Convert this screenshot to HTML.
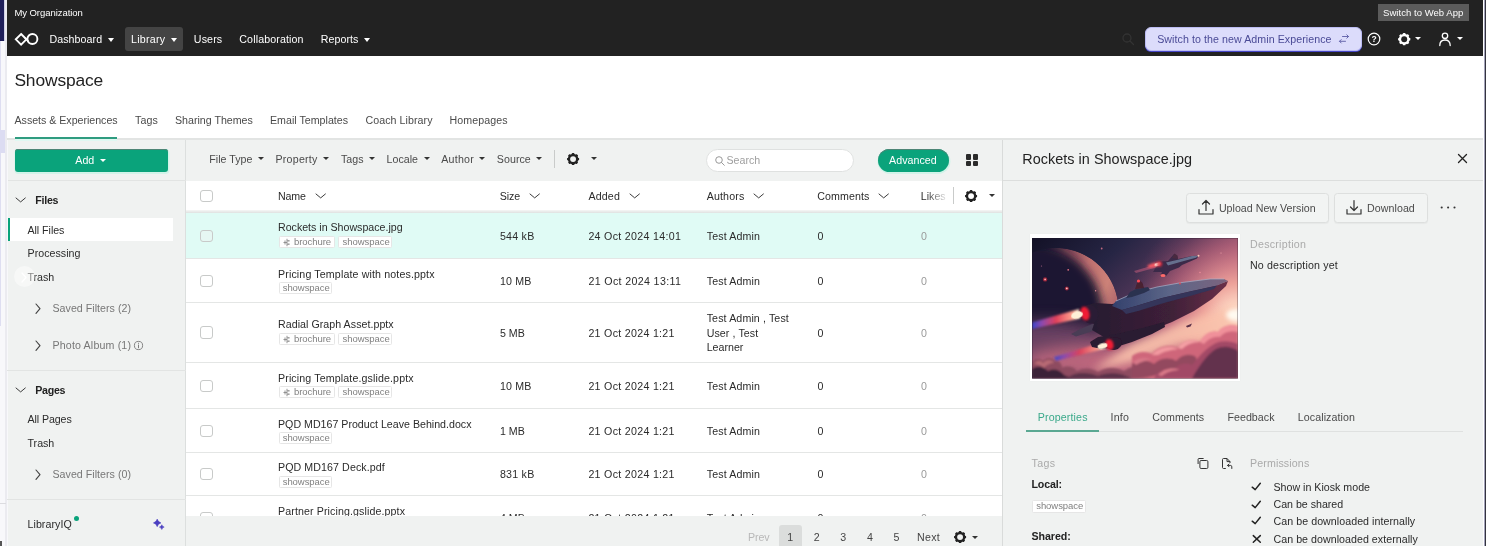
<!DOCTYPE html>
<html lang="en">
<head>
<meta charset="utf-8">
<title>Showspace</title>
<style>
*{box-sizing:border-box;margin:0;padding:0}
html,body{width:1486px;height:546px;overflow:hidden;background:#fff}
body{font-family:"Liberation Sans",sans-serif;font-size:10.65px;color:#2b2b2b;position:relative}
.a{position:absolute;white-space:nowrap}
.t{position:absolute;white-space:nowrap;line-height:1}
#root{position:absolute;left:0;top:0;width:1486px;height:546px;overflow:hidden;will-change:transform}
.tag{height:12.4px;border:1px solid #e6e6e6;border-radius:1.5px;background:#fff;color:#808080;font-size:9.5px;letter-spacing:-0.05px;line-height:10.6px;padding:0 3.5px;font-family:"Liberation Sans",sans-serif}
svg{overflow:visible}
</style>
</head>
<body>
<div id="root">
<div class="a" style="left:0px;top:0px;width:7.5px;height:546px;background:#f8f8fb;"></div>
<div class="a" style="left:0px;top:40.5px;width:1.2px;height:285px;background:#dedef1;"></div>
<div class="a" style="left:0px;top:130px;width:4.6px;height:23px;background:#dcdcf2;"></div>
<div class="a" style="left:4.6px;top:40.5px;width:2.2px;height:506px;background:#ebebf0;"></div>
<div class="a" style="left:0px;top:0px;width:4.5px;height:40.5px;background:#1e1e5a;"></div>
<div class="a" style="left:4.4px;top:0px;width:1px;height:40.5px;background:#cfcfe4;"></div>
<div class="a" style="left:5.4px;top:0px;width:1.2px;height:40.5px;background:#e8e8f0;"></div>
<div class="a" style="left:0px;top:503px;width:6px;height:1px;background:#dcdce0;"></div>
<div class="a" style="left:0px;top:541px;width:1.5px;height:5px;background:#555;"></div>
<div class="a" style="left:6.6px;top:0px;width:1476.4px;height:56.3px;background:#222222;"></div>
<div class="a" style="left:1483px;top:0px;width:3px;height:546px;background:#ffffff;"></div>
<div class="a" style="left:1484px;top:0px;width:1px;height:546px;background:#a4a4bb;"></div>
<div class="a" style="left:1485px;top:0px;width:1px;height:546px;background:#34343f;"></div>
<div class="t" style="left:14.4px;top:8.36px;font-size:9.5px;color:#fff;letter-spacing:-0.055px;">My Organization</div>
<svg class="a" style="left:14px;top:31px;" width="26" height="16" viewBox="0 0 26 16"><path d="M7.100 3 L12.400 8.300 L7.100 13.600 L1.800 8.300 Z" fill="none" stroke="#fff" stroke-width="1.900" stroke-linejoin="miter"/><circle cx="18.400" cy="8" r="5" fill="none" stroke="#fff" stroke-width="1.900"/><path d="M11 6.900 L13.400 9.300 L14.600 11" fill="none" stroke="#fff" stroke-width="1.900"/></svg>
<div class="t" style="left:49.4px;top:34.10px;font-size:10.65px;color:#fff;letter-spacing:0.080px;">Dashboard</div>
<div class="a" style="left:108px;top:37.50px;width:0;height:0;border-left:3.5px solid transparent;border-right:3.5px solid transparent;border-top:4px solid #fff"></div>
<div class="a" style="left:125px;top:27px;width:58px;height:24px;background:#444444;border-radius:3px;"></div>
<div class="t" style="left:131px;top:34.10px;font-size:10.65px;color:#fff;letter-spacing:0.245px;">Library</div>
<div class="a" style="left:170.5px;top:37.50px;width:0;height:0;border-left:3.5px solid transparent;border-right:3.5px solid transparent;border-top:4px solid #fff"></div>
<div class="t" style="left:193.8px;top:34.10px;font-size:10.65px;color:#fff;letter-spacing:0.151px;">Users</div>
<div class="t" style="left:239.3px;top:34.10px;font-size:10.65px;color:#fff;letter-spacing:0.125px;">Collaboration</div>
<div class="t" style="left:320.7px;top:34.10px;font-size:10.65px;color:#fff;letter-spacing:0.072px;">Reports</div>
<div class="a" style="left:364px;top:37.50px;width:0;height:0;border-left:3.5px solid transparent;border-right:3.5px solid transparent;border-top:4px solid #fff"></div>
<svg class="a" style="left:1121px;top:32px;" width="14" height="14" viewBox="0 0 14 14"><circle cx="6" cy="6" r="4" fill="none" stroke="#333" stroke-width="1.3"/><path d="M9 9 L12.500 12.500" stroke="#333" stroke-width="1.3" stroke-linecap="round"/></svg>
<div class="a" style="left:1145px;top:27px;width:217px;height:24px;background:#dcdcfb;border-radius:6px;border:1px solid #bcbcf3;box-shadow:0 1px 0 #4545c8;"></div>
<div class="t" style="left:1157.2px;top:34.00px;font-size:10.65px;color:#4a4a96;letter-spacing:0.066px;">Switch to the new Admin Experience</div>
<svg class="a" style="left:1337px;top:33px;" width="14" height="12" viewBox="0 0 14 12"><path d="M5.500 3.500 H11.500 M9.800 1.800 L11.500 3.500 L9.800 5.200 M8.500 8.300 H2.500 M4.200 6.600 L2.500 8.300 L4.200 10" fill="none" stroke="#6262aa" stroke-width="0.95" stroke-linecap="round" stroke-linejoin="round"/></svg>
<svg class="a" style="left:1366px;top:31px;" width="16" height="16" viewBox="0 0 16 16"><circle cx="8" cy="8" r="5.800" fill="none" stroke="#fff" stroke-width="1.2"/><text x="8" y="11" font-size="8.500" font-family="Liberation Sans, sans-serif" font-weight="700" fill="#fff" text-anchor="middle">?</text></svg>
<svg class="a" style="left:1396.8px;top:31.8px;" width="14.399999999999999" height="14.399999999999999" viewBox="0 0 14.399999999999999 14.399999999999999"><g transform="translate(7.20,7.20)"><rect x="-1.20" y="-6.12" width="2.40" height="1.80" rx="0.4" transform="rotate(0)" fill="#fff"/><rect x="-1.20" y="-6.12" width="2.40" height="1.80" rx="0.4" transform="rotate(45)" fill="#fff"/><rect x="-1.20" y="-6.12" width="2.40" height="1.80" rx="0.4" transform="rotate(90)" fill="#fff"/><rect x="-1.20" y="-6.12" width="2.40" height="1.80" rx="0.4" transform="rotate(135)" fill="#fff"/><rect x="-1.20" y="-6.12" width="2.40" height="1.80" rx="0.4" transform="rotate(180)" fill="#fff"/><rect x="-1.20" y="-6.12" width="2.40" height="1.80" rx="0.4" transform="rotate(225)" fill="#fff"/><rect x="-1.20" y="-6.12" width="2.40" height="1.80" rx="0.4" transform="rotate(270)" fill="#fff"/><rect x="-1.20" y="-6.12" width="2.40" height="1.80" rx="0.4" transform="rotate(315)" fill="#fff"/><circle r="5.40" fill="#fff"/><circle r="3.00" fill="#222222"/></g></svg>
<div class="a" style="left:1415.4px;top:37.20px;width:0;height:0;border-left:3.25px solid transparent;border-right:3.25px solid transparent;border-top:3.6px solid #fff"></div>
<svg class="a" style="left:1437px;top:31px;" width="16" height="16" viewBox="0 0 16 16"><circle cx="8" cy="4.800" r="2.700" fill="none" stroke="#fff" stroke-width="1.3"/><path d="M2.800 14.500 C2.800 10.500 5 9 8 9 C11 9 13.200 10.500 13.200 14.500" fill="none" stroke="#fff" stroke-width="1.3" stroke-linecap="round"/></svg>
<div class="a" style="left:1457.2px;top:37.20px;width:0;height:0;border-left:3.25px solid transparent;border-right:3.25px solid transparent;border-top:3.6px solid #fff"></div>
<div class="a" style="left:1377.7px;top:3.6px;width:91.3px;height:17.6px;background:#5b5b5b;"></div>
<div class="t" style="left:1383px;top:7.96px;font-size:9.5px;color:#fff;letter-spacing:0.046px;">Switch to Web App</div>
<div class="a" style="left:6.6px;top:56.3px;width:1476.4px;height:82px;background:#fff;"></div>
<div class="t" style="left:14.4px;top:72.40px;font-size:17.4px;color:#222;letter-spacing:-0.128px;">Showspace</div>
<div class="t" style="left:14.5px;top:115.10px;font-size:10.65px;color:#4a4a4a;letter-spacing:-0.021px;">Assets &amp; Experiences</div>
<div class="t" style="left:135px;top:115.10px;font-size:10.65px;color:#4a4a4a;letter-spacing:0.105px;">Tags</div>
<div class="t" style="left:175px;top:115.10px;font-size:10.65px;color:#4a4a4a;letter-spacing:-0.007px;">Sharing Themes</div>
<div class="t" style="left:270px;top:115.10px;font-size:10.65px;color:#4a4a4a;letter-spacing:0.016px;">Email Templates</div>
<div class="t" style="left:365.5px;top:115.10px;font-size:10.65px;color:#4a4a4a;letter-spacing:0.062px;">Coach Library</div>
<div class="t" style="left:449.5px;top:115.10px;font-size:10.65px;color:#4a4a4a;letter-spacing:0.076px;">Homepages</div>
<div class="a" style="left:7px;top:138px;width:1476px;height:1.5px;background:#e2e4e3;"></div>
<div class="a" style="left:7.5px;top:139.5px;width:178.5px;height:407px;background:#f0f2f1;border-right:1px solid #dcdfde;"></div>
<div class="a" style="left:14.7px;top:137.1px;width:102.8px;height:1.8px;background:#2f9c80;"></div>
<div class="a" style="left:14.7px;top:138.9px;width:102.8px;height:2.2px;background:#e0f8f2;"></div>
<div class="a" style="left:14.5px;top:148.7px;width:153px;height:23.2px;background:#0aa37b;border-radius:3px;box-shadow:0.5px 1px 0 1px #d2f3e9, inset 0 1px 0 #4d8576;"></div>
<div class="t" style="left:75.3px;top:155.30px;font-size:10.65px;color:#fff;">Add</div>
<div class="a" style="left:100.3px;top:159.25px;width:0;height:0;border-left:3.0px solid transparent;border-right:3.0px solid transparent;border-top:3.5px solid #fff"></div>
<div class="a" style="left:7.5px;top:180.2px;width:178.5px;height:1px;background:#e2e4e3;"></div>
<svg class="a" style="left:14.6px;top:197.15px;" width="11.3" height="6.9" viewBox="0 0 11.3 6.9"><path d="M1 1 L5.65 4.9 L10.3 1" fill="none" stroke="#3a3a3a" stroke-width="1.0" stroke-linecap="round" stroke-linejoin="round"/></svg>
<div class="t" style="left:35.2px;top:195.10px;font-size:10.65px;color:#222;font-weight:700;letter-spacing:-0.238px;">Files</div>
<div class="a" style="left:9px;top:218px;width:164px;height:23px;background:#fff;"></div>
<div class="a" style="left:8px;top:218px;width:2px;height:23px;background:#0aa37b;"></div>
<div class="t" style="left:27.5px;top:224.60px;font-size:10.65px;color:#2b2b2b;letter-spacing:-0.044px;">All Files</div>
<div class="t" style="left:27.5px;top:248.20px;font-size:10.65px;color:#2b2b2b;letter-spacing:0.040px;">Processing</div>
<div class="t" style="left:27.5px;top:272.00px;font-size:10.65px;color:#2b2b2b;letter-spacing:-0.028px;">Trash</div>
<div class="a" style="left:14px;top:266px;width:21px;height:21px;background:rgba(255,255,255,.45);border-radius:50%;"></div>
<svg class="a" style="left:21px;top:271.5px;" width="7" height="11" viewBox="0 0 7 11"><path d="M1 1 L5 5.5 L1 10" fill="none" stroke="#fff" stroke-width="1.2" stroke-linecap="round" stroke-linejoin="round"/></svg>
<svg class="a" style="left:35px;top:302.6px;" width="7" height="11.4" viewBox="0 0 7 11.4"><path d="M1 1 L5 5.7 L1 10.4" fill="none" stroke="#444" stroke-width="1.15" stroke-linecap="round" stroke-linejoin="round"/></svg>
<div class="t" style="left:52.5px;top:303.00px;font-size:10.65px;color:#777;letter-spacing:0.027px;">Saved Filters (2)</div>
<svg class="a" style="left:35px;top:339.6px;" width="7" height="11.4" viewBox="0 0 7 11.4"><path d="M1 1 L5 5.7 L1 10.4" fill="none" stroke="#444" stroke-width="1.15" stroke-linecap="round" stroke-linejoin="round"/></svg>
<div class="t" style="left:52.5px;top:340.00px;font-size:10.65px;color:#777;letter-spacing:0.156px;">Photo Album (1)</div>
<svg class="a" style="left:133.1px;top:339.5px;" width="11" height="11" viewBox="0 0 11 11"><circle cx="5.500" cy="5.500" r="4.100" fill="none" stroke="#777" stroke-width="0.9"/><path d="M5.500 5 V7.800 M5.500 3.200 V3.400" stroke="#777" stroke-width="0.95" stroke-linecap="round"/></svg>
<div class="a" style="left:7px;top:370px;width:179px;height:1px;background:#e2e4e3;"></div>
<svg class="a" style="left:14.6px;top:387.15000000000003px;" width="11.3" height="6.9" viewBox="0 0 11.3 6.9"><path d="M1 1 L5.65 4.9 L10.3 1" fill="none" stroke="#3a3a3a" stroke-width="1.0" stroke-linecap="round" stroke-linejoin="round"/></svg>
<div class="t" style="left:35.2px;top:385.10px;font-size:10.65px;color:#222;font-weight:700;letter-spacing:-0.265px;">Pages</div>
<div class="t" style="left:27.5px;top:414.40px;font-size:10.65px;color:#2b2b2b;letter-spacing:-0.094px;">All Pages</div>
<div class="t" style="left:27.5px;top:438.00px;font-size:10.65px;color:#2b2b2b;letter-spacing:-0.003px;">Trash</div>
<svg class="a" style="left:35px;top:468.6px;" width="7" height="11.4" viewBox="0 0 7 11.4"><path d="M1 1 L5 5.7 L1 10.4" fill="none" stroke="#444" stroke-width="1.15" stroke-linecap="round" stroke-linejoin="round"/></svg>
<div class="t" style="left:52.5px;top:469.00px;font-size:10.65px;color:#777;letter-spacing:0.027px;">Saved Filters (0)</div>
<div class="a" style="left:7px;top:499px;width:179px;height:1px;background:#e2e4e3;"></div>
<div class="t" style="left:27.5px;top:519.10px;font-size:10.65px;color:#2b2b2b;letter-spacing:0.054px;">LibraryIQ</div>
<div class="a" style="left:73.8px;top:516px;width:5px;height:5px;background:#0aa37b;border-radius:50%;"></div>
<svg class="a" style="left:152px;top:516.5px;" width="14" height="14" viewBox="0 0 14 14"><path d="M5.2 2.10 Q5.96 5.14 9.00 5.9 Q5.96 6.66 5.2 9.70 Q4.44 6.66 1.40 5.9 Q4.44 5.14 5.2 2.10 Z" fill="#4a3fc0" stroke="#4a3fc0" stroke-width="0.5" stroke-linejoin="round"/><path d="M9.8 7.70 Q10.28 9.62 12.20 10.1 Q10.28 10.58 9.8 12.50 Q9.32 10.58 7.40 10.1 Q9.32 9.62 9.8 7.70 Z" fill="#4a3fc0" stroke="#4a3fc0" stroke-width="0.5" stroke-linejoin="round"/></svg>
<div class="a" style="left:186px;top:139.5px;width:817px;height:41.5px;background:#f0f2f1;"></div>
<div class="t" style="left:209.2px;top:153.60px;font-size:10.65px;color:#4a4a4a;letter-spacing:0.039px;">File Type</div>
<div class="a" style="left:257.6px;top:157.35px;width:0;height:0;border-left:3.3px solid transparent;border-right:3.3px solid transparent;border-top:3.7px solid #333"></div>
<div class="t" style="left:275.5px;top:153.60px;font-size:10.65px;color:#4a4a4a;letter-spacing:0.226px;">Property</div>
<div class="a" style="left:322.7px;top:157.35px;width:0;height:0;border-left:3.3px solid transparent;border-right:3.3px solid transparent;border-top:3.7px solid #333"></div>
<div class="t" style="left:340.9px;top:153.60px;font-size:10.65px;color:#4a4a4a;letter-spacing:0.039px;">Tags</div>
<div class="a" style="left:369.0px;top:157.35px;width:0;height:0;border-left:3.3px solid transparent;border-right:3.3px solid transparent;border-top:3.7px solid #333"></div>
<div class="t" style="left:386.5px;top:153.60px;font-size:10.65px;color:#4a4a4a;letter-spacing:0.028px;">Locale</div>
<div class="a" style="left:423.5px;top:157.35px;width:0;height:0;border-left:3.3px solid transparent;border-right:3.3px solid transparent;border-top:3.7px solid #333"></div>
<div class="t" style="left:441.3px;top:153.60px;font-size:10.65px;color:#4a4a4a;letter-spacing:0.228px;">Author</div>
<div class="a" style="left:479.1px;top:157.35px;width:0;height:0;border-left:3.3px solid transparent;border-right:3.3px solid transparent;border-top:3.7px solid #333"></div>
<div class="t" style="left:496.8px;top:153.60px;font-size:10.65px;color:#4a4a4a;letter-spacing:0.056px;">Source</div>
<div class="a" style="left:536.0999999999999px;top:157.35px;width:0;height:0;border-left:3.3px solid transparent;border-right:3.3px solid transparent;border-top:3.7px solid #333"></div>
<div class="a" style="left:554px;top:150px;width:1px;height:18px;background:#c9cbca;"></div>
<svg class="a" style="left:565.62px;top:151.61999999999998px;" width="14.16" height="14.16" viewBox="0 0 14.16 14.16"><g transform="translate(7.08,7.08)"><rect x="-1.18" y="-6.02" width="2.36" height="1.77" rx="0.4" transform="rotate(0)" fill="#222"/><rect x="-1.18" y="-6.02" width="2.36" height="1.77" rx="0.4" transform="rotate(45)" fill="#222"/><rect x="-1.18" y="-6.02" width="2.36" height="1.77" rx="0.4" transform="rotate(90)" fill="#222"/><rect x="-1.18" y="-6.02" width="2.36" height="1.77" rx="0.4" transform="rotate(135)" fill="#222"/><rect x="-1.18" y="-6.02" width="2.36" height="1.77" rx="0.4" transform="rotate(180)" fill="#222"/><rect x="-1.18" y="-6.02" width="2.36" height="1.77" rx="0.4" transform="rotate(225)" fill="#222"/><rect x="-1.18" y="-6.02" width="2.36" height="1.77" rx="0.4" transform="rotate(270)" fill="#222"/><rect x="-1.18" y="-6.02" width="2.36" height="1.77" rx="0.4" transform="rotate(315)" fill="#222"/><circle r="5.31" fill="#222"/><circle r="2.95" fill="#f0f2f1"/></g></svg>
<div class="a" style="left:590.8px;top:157.15px;width:0;height:0;border-left:3.3px solid transparent;border-right:3.3px solid transparent;border-top:3.7px solid #333"></div>
<div class="a" style="left:706.4px;top:149px;width:147.4px;height:22.5px;background:#fff;border:1px solid #dfe1e0;border-radius:12px;"></div>
<svg class="a" style="left:714px;top:154.5px;" width="12" height="12" viewBox="0 0 12 12"><circle cx="5" cy="5" r="3.300" fill="none" stroke="#999" stroke-width="1"/><path d="M7.500 7.500 L10.300 10.300" stroke="#999" stroke-width="1" stroke-linecap="round"/></svg>
<div class="t" style="left:726.5px;top:155.30px;font-size:10.65px;color:#a0a0a0;letter-spacing:-0.004px;">Search</div>
<div class="a" style="left:878px;top:148.6px;width:70.5px;height:23.2px;background:#0aa37b;border-radius:12px;box-shadow:0.5px 1px 0 1px #d2f3e9, inset 0 1px 0 #4d8576;"></div>
<div class="t" style="left:889.1px;top:155.30px;font-size:10.65px;color:#fff;letter-spacing:0.039px;">Advanced</div>
<div class="a" style="left:966.2px;top:154.4px;width:5.2px;height:5.2px;background:#2b2b2b;border-radius:1px;"></div>
<div class="a" style="left:966.2px;top:161.3px;width:5.2px;height:5.2px;background:#2b2b2b;border-radius:1px;"></div>
<div class="a" style="left:973.1px;top:154.4px;width:5.2px;height:5.2px;background:#2b2b2b;border-radius:1px;"></div>
<div class="a" style="left:973.1px;top:161.3px;width:5.2px;height:5.2px;background:#2b2b2b;border-radius:1px;"></div>
<div class="a" style="left:186px;top:181px;width:817px;height:365px;background:#fff;"></div>
<div class="a" style="left:186px;top:210px;width:817px;height:2.9px;background:linear-gradient(#f6f7f6,#dfe1e0);"></div>
<div class="a" style="left:200.4px;top:189.8px;width:12.3px;height:12.3px;background:#fff;border:1px solid #c8cac9;border-radius:3px;"></div>
<div class="t" style="left:278px;top:190.80px;font-size:10.65px;color:#2b2b2b;letter-spacing:-0.130px;">Name</div>
<svg class="a" style="left:315.1px;top:192.95000000000002px;" width="11.4" height="6.9" viewBox="0 0 11.4 6.9"><path d="M1 1 L5.7 4.9 L10.4 1" fill="none" stroke="#3a3a3a" stroke-width="1.0" stroke-linecap="round" stroke-linejoin="round"/></svg>
<div class="t" style="left:499.7px;top:190.80px;font-size:10.65px;color:#2b2b2b;letter-spacing:-0.101px;">Size</div>
<svg class="a" style="left:529.0px;top:192.95000000000002px;" width="11.4" height="6.9" viewBox="0 0 11.4 6.9"><path d="M1 1 L5.7 4.9 L10.4 1" fill="none" stroke="#3a3a3a" stroke-width="1.0" stroke-linecap="round" stroke-linejoin="round"/></svg>
<div class="t" style="left:588.4px;top:190.80px;font-size:10.65px;color:#2b2b2b;letter-spacing:0.180px;">Added</div>
<svg class="a" style="left:628.7px;top:192.95000000000002px;" width="11.4" height="6.9" viewBox="0 0 11.4 6.9"><path d="M1 1 L5.7 4.9 L10.4 1" fill="none" stroke="#3a3a3a" stroke-width="1.0" stroke-linecap="round" stroke-linejoin="round"/></svg>
<div class="t" style="left:706.7px;top:190.80px;font-size:10.65px;color:#2b2b2b;letter-spacing:0.155px;">Authors</div>
<svg class="a" style="left:753.1px;top:192.95000000000002px;" width="11.4" height="6.9" viewBox="0 0 11.4 6.9"><path d="M1 1 L5.7 4.9 L10.4 1" fill="none" stroke="#3a3a3a" stroke-width="1.0" stroke-linecap="round" stroke-linejoin="round"/></svg>
<div class="t" style="left:817.2px;top:190.80px;font-size:10.65px;color:#2b2b2b;letter-spacing:0.092px;">Comments</div>
<svg class="a" style="left:878.4px;top:192.95000000000002px;" width="11.4" height="6.9" viewBox="0 0 11.4 6.9"><path d="M1 1 L5.7 4.9 L10.4 1" fill="none" stroke="#3a3a3a" stroke-width="1.0" stroke-linecap="round" stroke-linejoin="round"/></svg>
<div class="t" style="left:920.8px;top:190.80px;font-size:10.65px;color:#2b2b2b;letter-spacing:0.014px;">Likes</div>
<div class="a" style="left:926px;top:185px;width:27px;height:22px;background:linear-gradient(90deg,rgba(255,255,255,0),rgba(255,255,255,.95) 80%);"></div>
<div class="a" style="left:953px;top:187px;width:1px;height:17px;background:#c9cbca;"></div>
<svg class="a" style="left:964.3199999999999px;top:188.72px;" width="14.16" height="14.16" viewBox="0 0 14.16 14.16"><g transform="translate(7.08,7.08)"><rect x="-1.18" y="-6.02" width="2.36" height="1.77" rx="0.4" transform="rotate(0)" fill="#222"/><rect x="-1.18" y="-6.02" width="2.36" height="1.77" rx="0.4" transform="rotate(45)" fill="#222"/><rect x="-1.18" y="-6.02" width="2.36" height="1.77" rx="0.4" transform="rotate(90)" fill="#222"/><rect x="-1.18" y="-6.02" width="2.36" height="1.77" rx="0.4" transform="rotate(135)" fill="#222"/><rect x="-1.18" y="-6.02" width="2.36" height="1.77" rx="0.4" transform="rotate(180)" fill="#222"/><rect x="-1.18" y="-6.02" width="2.36" height="1.77" rx="0.4" transform="rotate(225)" fill="#222"/><rect x="-1.18" y="-6.02" width="2.36" height="1.77" rx="0.4" transform="rotate(270)" fill="#222"/><rect x="-1.18" y="-6.02" width="2.36" height="1.77" rx="0.4" transform="rotate(315)" fill="#222"/><circle r="5.31" fill="#222"/><circle r="2.95" fill="#fff"/></g></svg>
<div class="a" style="left:988.9px;top:194.45px;width:0;height:0;border-left:3.3px solid transparent;border-right:3.3px solid transparent;border-top:3.7px solid #333"></div>
<div class="a" style="left:186px;top:212.9px;width:817px;height:45.400000000000006px;background:#e0fbf5;"></div>
<div class="a" style="left:186px;top:258.3px;width:817px;height:1px;background:#e4e6e5;"></div>
<div class="a" style="left:200.4px;top:229.79999999999998px;width:12.3px;height:12.3px;background:#e6f7f3;border:1px solid #c8cac9;border-radius:3px;"></div>
<div class="t" style="left:278px;top:222.30px;font-size:10.65px;color:#2b2b2b;letter-spacing:-0.009px;">Rockets in Showspace.jpg</div>
<div class="a tag" style="left:278.5px;top:235.50px;padding-left:14.5px;width:56.3px;"><svg width="9" height="9" viewBox="0 0 9 9" style="position:absolute;left:3.500px;top:1.300px"><path d="M4 0.800 V8.200 M2 2.500 V6.500 M0.500 4.500 H4 M6 2 V3.600 M6 5.400 V7 M4 2.800 H6 M4 6.200 H6" stroke="#8a8a8a" stroke-width="0.9" fill="none"/></svg>brochure</div>
<div class="a tag" style="left:338.4px;top:235.50px;padding-left:3.2px;width:53.4px;">showspace</div>
<div class="t" style="left:499.9px;top:231.00px;font-size:10.65px;color:#2b2b2b;letter-spacing:0.252px;">544 kB</div>
<div class="t" style="left:588.4px;top:231.00px;font-size:10.65px;color:#2b2b2b;letter-spacing:0.309px;">24 Oct 2024 14:01</div>
<div class="t" style="left:706.7px;top:231.00px;font-size:10.65px;color:#2b2b2b;letter-spacing:0.128px;">Test Admin</div>
<div class="t" style="left:817.4px;top:231.00px;font-size:10.65px;color:#2b2b2b;">0</div>
<div class="t" style="left:921px;top:231.00px;font-size:10.65px;color:#9a9a9a;">0</div>
<div class="a" style="left:186px;top:302px;width:817px;height:1px;background:#e4e6e5;"></div>
<div class="a" style="left:200.4px;top:274.8px;width:12.3px;height:12.3px;background:#fff;border:1px solid #c8cac9;border-radius:3px;"></div>
<div class="t" style="left:278px;top:268.80px;font-size:10.65px;color:#2b2b2b;letter-spacing:0.132px;">Pricing Template with notes.pptx</div>
<div class="a tag" style="left:278.5px;top:282.00px;padding-left:3.2px;width:53.4px;">showspace</div>
<div class="t" style="left:499.9px;top:276.00px;font-size:10.65px;color:#2b2b2b;letter-spacing:0.184px;">10 MB</div>
<div class="t" style="left:588.4px;top:276.00px;font-size:10.65px;color:#2b2b2b;letter-spacing:0.357px;">21 Oct 2024 13:11</div>
<div class="t" style="left:706.7px;top:276.00px;font-size:10.65px;color:#2b2b2b;letter-spacing:0.128px;">Test Admin</div>
<div class="t" style="left:817.4px;top:276.00px;font-size:10.65px;color:#2b2b2b;">0</div>
<div class="t" style="left:921px;top:276.00px;font-size:10.65px;color:#9a9a9a;">0</div>
<div class="a" style="left:186px;top:362px;width:817px;height:1px;background:#e4e6e5;"></div>
<div class="a" style="left:200.4px;top:326.40000000000003px;width:12.3px;height:12.3px;background:#fff;border:1px solid #c8cac9;border-radius:3px;"></div>
<div class="t" style="left:278px;top:319.20px;font-size:10.65px;color:#2b2b2b;letter-spacing:0.043px;">Radial Graph Asset.pptx</div>
<div class="a tag" style="left:278.5px;top:332.50px;padding-left:14.5px;width:56.3px;"><svg width="9" height="9" viewBox="0 0 9 9" style="position:absolute;left:3.500px;top:1.300px"><path d="M4 0.800 V8.200 M2 2.500 V6.500 M0.500 4.500 H4 M6 2 V3.600 M6 5.400 V7 M4 2.800 H6 M4 6.200 H6" stroke="#8a8a8a" stroke-width="0.9" fill="none"/></svg>brochure</div>
<div class="a tag" style="left:338.4px;top:332.50px;padding-left:3.2px;width:53.4px;">showspace</div>
<div class="t" style="left:499.9px;top:327.60px;font-size:10.65px;color:#2b2b2b;letter-spacing:0.019px;">5 MB</div>
<div class="t" style="left:588.4px;top:327.60px;font-size:10.65px;color:#2b2b2b;letter-spacing:0.297px;">21 Oct 2024 1:21</div>
<div class="t" style="left:706.7px;top:312.80px;font-size:10.65px;color:#2b2b2b;letter-spacing:0.117px;">Test Admin , Test</div>
<div class="t" style="left:706.7px;top:327.60px;font-size:10.65px;color:#2b2b2b;letter-spacing:0.084px;">User , Test</div>
<div class="t" style="left:706.7px;top:342.40px;font-size:10.65px;color:#2b2b2b;letter-spacing:0.002px;">Learner</div>
<div class="t" style="left:817.4px;top:327.60px;font-size:10.65px;color:#2b2b2b;">0</div>
<div class="t" style="left:921px;top:327.60px;font-size:10.65px;color:#9a9a9a;">0</div>
<div class="a" style="left:186px;top:408px;width:817px;height:1px;background:#e4e6e5;"></div>
<div class="a" style="left:200.4px;top:379.6px;width:12.3px;height:12.3px;background:#fff;border:1px solid #c8cac9;border-radius:3px;"></div>
<div class="t" style="left:278px;top:372.60px;font-size:10.65px;color:#2b2b2b;letter-spacing:0.122px;">Pricing Template.gslide.pptx</div>
<div class="a tag" style="left:278.5px;top:385.90px;padding-left:14.5px;width:56.3px;"><svg width="9" height="9" viewBox="0 0 9 9" style="position:absolute;left:3.500px;top:1.300px"><path d="M4 0.800 V8.200 M2 2.500 V6.500 M0.500 4.500 H4 M6 2 V3.600 M6 5.400 V7 M4 2.800 H6 M4 6.200 H6" stroke="#8a8a8a" stroke-width="0.9" fill="none"/></svg>brochure</div>
<div class="a tag" style="left:338.4px;top:385.90px;padding-left:3.2px;width:53.4px;">showspace</div>
<div class="t" style="left:499.9px;top:380.80px;font-size:10.65px;color:#2b2b2b;letter-spacing:0.184px;">10 MB</div>
<div class="t" style="left:588.4px;top:380.80px;font-size:10.65px;color:#2b2b2b;letter-spacing:0.297px;">21 Oct 2024 1:21</div>
<div class="t" style="left:706.7px;top:380.80px;font-size:10.65px;color:#2b2b2b;letter-spacing:0.128px;">Test Admin</div>
<div class="t" style="left:817.4px;top:380.80px;font-size:10.65px;color:#2b2b2b;">0</div>
<div class="t" style="left:921px;top:380.80px;font-size:10.65px;color:#9a9a9a;">0</div>
<div class="a" style="left:186px;top:452px;width:817px;height:1px;background:#e4e6e5;"></div>
<div class="a" style="left:200.4px;top:424.6px;width:12.3px;height:12.3px;background:#fff;border:1px solid #c8cac9;border-radius:3px;"></div>
<div class="t" style="left:278px;top:418.80px;font-size:10.65px;color:#2b2b2b;letter-spacing:0.002px;">PQD MD167 Product Leave Behind.docx</div>
<div class="a tag" style="left:278.5px;top:432.10px;padding-left:3.2px;width:53.4px;">showspace</div>
<div class="t" style="left:499.9px;top:425.80px;font-size:10.65px;color:#2b2b2b;letter-spacing:0.019px;">1 MB</div>
<div class="t" style="left:588.4px;top:425.80px;font-size:10.65px;color:#2b2b2b;letter-spacing:0.297px;">21 Oct 2024 1:21</div>
<div class="t" style="left:706.7px;top:425.80px;font-size:10.65px;color:#2b2b2b;letter-spacing:0.128px;">Test Admin</div>
<div class="t" style="left:817.4px;top:425.80px;font-size:10.65px;color:#2b2b2b;">0</div>
<div class="t" style="left:921px;top:425.80px;font-size:10.65px;color:#9a9a9a;">0</div>
<div class="a" style="left:186px;top:495px;width:817px;height:1px;background:#e4e6e5;"></div>
<div class="a" style="left:200.4px;top:468.20000000000005px;width:12.3px;height:12.3px;background:#fff;border:1px solid #c8cac9;border-radius:3px;"></div>
<div class="t" style="left:278px;top:462.40px;font-size:10.65px;color:#2b2b2b;letter-spacing:0.084px;">PQD MD167 Deck.pdf</div>
<div class="a tag" style="left:278.5px;top:475.60px;padding-left:3.2px;width:53.4px;">showspace</div>
<div class="t" style="left:499.9px;top:469.40px;font-size:10.65px;color:#2b2b2b;letter-spacing:0.252px;">831 kB</div>
<div class="t" style="left:588.4px;top:469.40px;font-size:10.65px;color:#2b2b2b;letter-spacing:0.297px;">21 Oct 2024 1:21</div>
<div class="t" style="left:706.7px;top:469.40px;font-size:10.65px;color:#2b2b2b;letter-spacing:0.128px;">Test Admin</div>
<div class="t" style="left:817.4px;top:469.40px;font-size:10.65px;color:#2b2b2b;">0</div>
<div class="t" style="left:921px;top:469.40px;font-size:10.65px;color:#9a9a9a;">0</div>
<div class="a" style="left:186px;top:540px;width:817px;height:1px;background:#e4e6e5;"></div>
<div class="a" style="left:200.4px;top:512.0px;width:12.3px;height:12.3px;background:#fff;border:1px solid #c8cac9;border-radius:3px;"></div>
<div class="t" style="left:278px;top:506.00px;font-size:10.65px;color:#2b2b2b;letter-spacing:0.108px;">Partner Pricing.gslide.pptx</div>
<div class="a tag" style="left:278.5px;top:518.70px;padding-left:3.2px;width:53.4px;">showspace</div>
<div class="t" style="left:499.9px;top:513.20px;font-size:10.65px;color:#2b2b2b;letter-spacing:0.019px;">4 MB</div>
<div class="t" style="left:588.4px;top:513.20px;font-size:10.65px;color:#2b2b2b;letter-spacing:0.297px;">21 Oct 2024 1:21</div>
<div class="t" style="left:706.7px;top:513.20px;font-size:10.65px;color:#2b2b2b;letter-spacing:0.128px;">Test Admin</div>
<div class="t" style="left:817.4px;top:513.20px;font-size:10.65px;color:#2b2b2b;">0</div>
<div class="t" style="left:921px;top:513.20px;font-size:10.65px;color:#9a9a9a;">0</div>
<div class="a" style="left:186px;top:516px;width:817px;height:30px;background:#f0f2f1;"></div>
<div class="t" style="left:748px;top:532.10px;font-size:10.65px;color:#b8b8b8;letter-spacing:-0.130px;">Prev</div>
<div class="a" style="left:778.7px;top:525px;width:23.6px;height:21px;background:#dbdddc;border-radius:3px 3px 0 0;"></div>
<div class="t" style="left:787.3px;top:532.10px;font-size:10.65px;color:#444;">1</div>
<div class="t" style="left:813.8px;top:532.10px;font-size:10.65px;color:#444;">2</div>
<div class="t" style="left:840.3px;top:532.10px;font-size:10.65px;color:#444;">3</div>
<div class="t" style="left:866.9px;top:532.10px;font-size:10.65px;color:#444;">4</div>
<div class="t" style="left:893.5px;top:532.10px;font-size:10.65px;color:#444;">5</div>
<div class="t" style="left:917px;top:532.10px;font-size:10.65px;color:#444;letter-spacing:0.303px;">Next</div>
<svg class="a" style="left:953.12px;top:529.92px;" width="14.16" height="14.16" viewBox="0 0 14.16 14.16"><g transform="translate(7.08,7.08)"><rect x="-1.18" y="-6.02" width="2.36" height="1.77" rx="0.4" transform="rotate(0)" fill="#222"/><rect x="-1.18" y="-6.02" width="2.36" height="1.77" rx="0.4" transform="rotate(45)" fill="#222"/><rect x="-1.18" y="-6.02" width="2.36" height="1.77" rx="0.4" transform="rotate(90)" fill="#222"/><rect x="-1.18" y="-6.02" width="2.36" height="1.77" rx="0.4" transform="rotate(135)" fill="#222"/><rect x="-1.18" y="-6.02" width="2.36" height="1.77" rx="0.4" transform="rotate(180)" fill="#222"/><rect x="-1.18" y="-6.02" width="2.36" height="1.77" rx="0.4" transform="rotate(225)" fill="#222"/><rect x="-1.18" y="-6.02" width="2.36" height="1.77" rx="0.4" transform="rotate(270)" fill="#222"/><rect x="-1.18" y="-6.02" width="2.36" height="1.77" rx="0.4" transform="rotate(315)" fill="#222"/><circle r="5.31" fill="#222"/><circle r="2.95" fill="#f0f2f1"/></g></svg>
<div class="a" style="left:972.3px;top:535.65px;width:0;height:0;border-left:3.3px solid transparent;border-right:3.3px solid transparent;border-top:3.7px solid #333"></div>
<div class="a" style="left:1001.5px;top:139.5px;width:481.5px;height:407px;background:#f0f2f1;border-left:1px solid #d9dbda;"></div>
<div class="t" style="left:1022.2px;top:152.17px;font-size:14.4px;color:#222;letter-spacing:0.049px;">Rockets in Showspace.jpg</div>
<svg class="a" style="left:1457.4px;top:153.2px;" width="11" height="11" viewBox="0 0 11 11"><path d="M1.500 1.500 L9.500 9.500 M9.500 1.500 L1.500 9.500" stroke="#222" stroke-width="1.3" stroke-linecap="round"/></svg>
<div class="a" style="left:1003px;top:180px;width:480px;height:1px;background:#dcdedd;"></div>
<div class="a" style="left:1186.4px;top:193px;width:142.4px;height:29.5px;background:#f2f4f3;border:1px solid #dddfde;border-radius:3.5px;box-shadow:0 1px 1px rgba(0,0,0,.04);"></div>
<svg class="a" style="left:1197px;top:199px;" width="18" height="18" viewBox="0 0 18 18"><path d="M9 11.500 V2 M5.500 5 L9 1.500 L12.500 5 M2 10.500 V15 H16 V10.500" fill="none" stroke="#333" stroke-width="1.2" stroke-linecap="round" stroke-linejoin="round"/></svg>
<div class="t" style="left:1218.9px;top:202.60px;font-size:10.65px;color:#4a4a4a;letter-spacing:0.022px;">Upload New Version</div>
<div class="a" style="left:1334.2px;top:193px;width:93.6px;height:29.5px;background:#f2f4f3;border:1px solid #dddfde;border-radius:3.5px;box-shadow:0 1px 1px rgba(0,0,0,.04);"></div>
<svg class="a" style="left:1345px;top:199px;" width="18" height="18" viewBox="0 0 18 18"><path d="M9 1.500 V11 M5.500 8 L9 11.500 L12.500 8 M2 10.500 V15 H16 V10.500" fill="none" stroke="#333" stroke-width="1.2" stroke-linecap="round" stroke-linejoin="round"/></svg>
<div class="t" style="left:1367px;top:202.60px;font-size:10.65px;color:#4a4a4a;letter-spacing:0.067px;">Download</div>
<svg class="a" style="left:1440px;top:203px;" width="18" height="9" viewBox="0 0 18 9"><circle cx="1.700" cy="4.500" r="1.050" fill="#333"/><circle cx="8.100" cy="4.500" r="1.050" fill="#333"/><circle cx="14.500" cy="4.500" r="1.050" fill="#333"/></svg>
<div class="a" style="left:1030px;top:234px;width:210px;height:146.5px;background:#fff;box-shadow:0 0 1px rgba(0,0,0,.06);"></div>
<svg class="a" style="left:1032px;top:237.5px" width="206" height="140.5" viewBox="0 0 206 140.5" preserveAspectRatio="none">
<defs>
<linearGradient id="sky" x1="0" y1="0" x2="1" y2="0.75">
<stop offset="0" stop-color="#131126"/><stop offset="0.3" stop-color="#262544"/><stop offset="0.5" stop-color="#4b3455"/><stop offset="0.72" stop-color="#a8647c"/><stop offset="1" stop-color="#ea9c9a"/>
</linearGradient>
<radialGradient id="sun" cx="205" cy="78" r="110" gradientUnits="userSpaceOnUse">
<stop offset="0" stop-color="#fff6ea"/><stop offset="0.08" stop-color="#ffe0cc"/><stop offset="0.3" stop-color="#f6aa9e" stop-opacity=".85"/><stop offset="0.65" stop-color="#d0687e" stop-opacity=".45"/><stop offset="1" stop-color="#a04868" stop-opacity="0"/>
</radialGradient>
<linearGradient id="planet" x1="8" y1="20" x2="88" y2="60" gradientUnits="userSpaceOnUse"><stop offset="0" stop-color="#7a4254" stop-opacity="0"/><stop offset="0.22" stop-color="#8a4a58" stop-opacity=".9"/><stop offset="0.5" stop-color="#c07070"/><stop offset="0.8" stop-color="#cc8278"/><stop offset="1" stop-color="#b0666c"/></linearGradient>
<linearGradient id="ex" x1="1" y1="0" x2="0" y2="0">
<stop offset="0" stop-color="#fff2dc"/><stop offset="0.18" stop-color="#ff9a8a"/><stop offset="0.5" stop-color="#e0405a"/><stop offset="0.8" stop-color="#8a4ab0"/><stop offset="1" stop-color="#3a44c8"/>
</linearGradient>
<linearGradient id="hulltop" x1="0" y1="0" x2="1" y2="0">
<stop offset="0" stop-color="#33406c"/><stop offset="0.5" stop-color="#5c6688"/><stop offset="1" stop-color="#7c647e"/>
</linearGradient>
<linearGradient id="hullbot" x1="0" y1="0" x2="1" y2="0">
<stop offset="0" stop-color="#241a30"/><stop offset="0.6" stop-color="#3e2038"/><stop offset="1" stop-color="#6a3048"/>
</linearGradient>
<filter id="f05" x="-20%" y="-20%" width="140%" height="140%"><feGaussianBlur stdDeviation="0.5"/></filter>
<filter id="f1" x="-30%" y="-30%" width="160%" height="160%"><feGaussianBlur stdDeviation="1"/></filter>
<filter id="f2" x="-30%" y="-30%" width="160%" height="160%"><feGaussianBlur stdDeviation="2"/></filter>
<filter id="f4" x="-40%" y="-40%" width="180%" height="180%"><feGaussianBlur stdDeviation="4"/></filter>
<filter id="f6" x="-40%" y="-40%" width="180%" height="180%"><feGaussianBlur stdDeviation="4.500"/></filter>
<filter id="f8" x="-50%" y="-50%" width="200%" height="200%"><feGaussianBlur stdDeviation="8"/></filter>
<clipPath id="cp"><circle cx="23.900" cy="72.500" r="62.600"/></clipPath>
<clipPath id="ci"><rect x="0" y="0" width="206" height="140.5"/></clipPath>
</defs>
<g clip-path="url(#ci)">
<rect width="206" height="140.5" fill="url(#sky)"/>
<rect width="206" height="140.5" fill="url(#sun)"/>
<!-- planet crescent -->
<g clip-path="url(#cp)"><circle cx="23.900" cy="72.500" r="62.600" fill="url(#planet)"/><circle cx="1.200" cy="77.700" r="70" fill="#1e1733" filter="url(#f6)"/></g>
<!-- haze over lower planet -->
<ellipse cx="15" cy="110" rx="72" ry="27" fill="#6e4466" opacity=".95" filter="url(#f8)"/>
<ellipse cx="70" cy="124" rx="80" ry="17" fill="#c46a80" opacity=".9" filter="url(#f8)"/>
<!-- stars -->
<g filter="url(#f05)"><circle cx="13.100" cy="41.400" r="2.200" fill="#c8283c" opacity=".7"/><circle cx="13.100" cy="41.400" r="0.900" fill="#ffb0b0"/><circle cx="34.800" cy="50.400" r="2" fill="#c8283c" opacity=".7"/><circle cx="34.800" cy="50.400" r="0.900" fill="#ffc0c0"/><circle cx="36.200" cy="31.800" r="0.900" fill="#e07080"/><circle cx="69.700" cy="10.500" r="0.900" fill="#c06a80"/><circle cx="63.600" cy="52.700" r="0.700" fill="#e08a90"/><circle cx="9.500" cy="28" r="0.600" fill="#a06080"/><circle cx="189" cy="15" r="0.600" fill="#f0a0a8"/><circle cx="168" cy="34.500" r="0.800" fill="#e88a98"/></g>
<!-- sun light band -->
<path d="M206 66 L206 98 L150 106 L100 124 L60 132 L100 106 L150 84 Z" fill="#f9c2ac" opacity=".9" filter="url(#f4)"/>
<ellipse cx="203" cy="77" rx="9" ry="6" fill="#fffaf0" filter="url(#f2)"/>
<!-- clouds -->
<g filter="url(#f1)">
<path d="M0 140.500 L0 124 C3 120 8 120 11 123 C14 119 20 119 23 123 C27 122 30 126 30 130 C36 127 42 129 45 133 C52 129 60 130 66 134 C74 129 84 129 92 133 C100 127 110 127 118 131 L118 140.500 Z" fill="#8e4c60"/>
<path d="M2 126 C5 122 9 122 11 125 C14 121 20 121 22 125 C18 125 14 127 12 130 C9 127 5 126 2 126 Z" fill="#b86a74"/>
<path d="M0 140.500 L0 131 C6 127 12 129 16 133 C22 130 28 132 32 137 L40 140.500 Z" fill="#3a2038"/>
<path d="M34 140.500 C44 133 56 134 66 138 C76 134 88 134 100 140.500 Z" fill="#5a3048"/>
<path d="M100 140.500 L100 118 C106 113 114 113 120 116 C126 108 138 106 146 110 C150 103 160 100 168 104 C172 96 180 92 186 94 C190 88 198 86 206 88 L206 140.500 Z" fill="#cf667a"/>
<path d="M100 140.500 L100 126 C108 121 116 122 122 126 C128 120 138 119 144 123 C150 116 158 115 164 119 C166 125 160 130 152 131 C146 137 134 138 126 136 C120 139 110 140 100 140.500 Z" fill="#93485e"/>
<path d="M122 140.500 C126 132 134 129 142 131 C146 126 154 124 160 127 C166 120 174 110 182 106 C190 102 198 103 206 106 L206 140.500 Z" fill="#a24a66"/>
<path d="M160 140.500 C166 130 174 117 184 111 C192 107 200 109 206 113 L206 140.500 Z" fill="#64304e"/>
<path d="M120 117 C126 109 138 107 146 111 C140 112 132 113 126 117 Z" fill="#f39aa0"/>
<path d="M146 110 C150 103 160 100 168 104 C160 104 154 107 150 111 Z" fill="#f5a0a4"/>
<path d="M168 104 C172 96 180 92 186 94 C190 88 198 86 206 88 L206 94 C198 92 192 94 188 99 C182 98 176 101 172 106 Z" fill="#f0909a"/>
<path d="M126 137 C132 130 142 129 148 132 C142 132 134 134 130 138 Z" fill="#dc7c8a"/>
<path d="M101 124 C107 119 115 119 120 122 C114 122 108 124 104 127 Z" fill="#d87888"/>
</g>
<!-- distant ship -->
<path d="M154 88 L160 85.500 L158.500 88.500 L155 89.500 Z" fill="#5a3048" filter="url(#f05)"/>
<!-- small ship -->
<g filter="url(#f05)">
<path d="M102 33 L124 26.500 L126 29 L104 35 Z" fill="#c05a7a" opacity=".55"/>
<path d="M123 24 L136 23 L142 16 L145 17.500 L146 21 L160 18 L166.500 17.800 L165 20.500 L150 27 L147 29.500 L138 33 L134 38 L128 38.500 L130 34 L121 34 L124 29 Z" fill="#3b2a48"/>
<path d="M134 24.500 L147 21.500 L160 18 L166.500 17.800 L164 19.800 L150 23.500 L136 27.500 Z" fill="#66708e"/>
<path d="M140 20 L142.500 15.500 L145.500 17.500 L146 21 Z" fill="#4a2a40"/>
</g>
<ellipse cx="122" cy="27" rx="7" ry="2" fill="#ff5a64" filter="url(#f1)" transform="rotate(-15 122 27)"/>
<ellipse cx="125.500" cy="26.200" rx="3" ry="1.500" fill="#fff0e0" filter="url(#f05)" transform="rotate(-15 125.500 26.200)"/>
<circle cx="127.500" cy="26" r="2.800" fill="#e02a3c" opacity=".8" filter="url(#f1)"/>
<ellipse cx="131" cy="37.600" rx="2.600" ry="1.500" fill="#ff6a6a" filter="url(#f05)"/>
<circle cx="166.500" cy="17.800" r="1" fill="#ffc8b8" filter="url(#f05)"/>
<!-- exhaust trails -->
<path d="M47 71 L0 84.500 L0 91 L48 80.500 Z" fill="url(#ex)" filter="url(#f1)"/>
<path d="M73 103.500 L22 119 L24 123 L74 110.500 Z" fill="url(#ex)" opacity=".9" filter="url(#f1)"/>
<!-- main ship -->
<g filter="url(#f05)">
<!-- wing -->
<path d="M39 96 L48 91 L64 84.500 L70 88 L58 94 L44 98.500 Z" fill="#4a3c54"/>
<!-- hull underside -->
<path d="M52 69 L62 65 L80 66 L102 62 L145 55 L185 47 L196 43 L194 48 L180 61 L162 73 L140 84 L120 92 L100 98 L84 100 L70 98 L60 92 L62 86 L54 82 L50 76 Z" fill="url(#hullbot)"/>
<!-- lower engine pod -->
<path d="M58 104 L66 99 L84 96 L110 90 L132 84 L133 89 L120 96 L100 104 L84 109 L70 111 L60 109 Z" fill="#2a1a30"/>
<!-- hull top light -->
<path d="M84 63 L102 55 L125 49 L150 44.500 L178 41 L192 41 L196 43 L185 47.500 L160 53 L130 60 L104 68 L90 72 L80 68 Z" fill="url(#hulltop)"/>
<path d="M84 63 L102 55 L125 49 L150 44.500 L178 41 L192 41" fill="none" stroke="#a8b0c8" stroke-width="0.700"/>
<path d="M90 72 L104 68 L130 60 L160 53 L185 47.500 L182 51 L160 57.500 L132 65 L106 73 L94 76 Z" fill="#34345a"/>
<!-- superstructure -->
<path d="M94 60 L98 54 L104 51 L116 49 L118 52 L112 55 L100 59 Z" fill="#2c3050"/>
<path d="M103 51 L105 45 L108 42.500 L110.500 45 L112 50 Z" fill="#4a2030"/>
<!-- engine housings -->
<ellipse cx="58" cy="76" rx="8" ry="9.500" fill="#2a1c34" transform="rotate(-14 58 76)"/>
<ellipse cx="82" cy="105.500" rx="8" ry="6.500" fill="#2a1a30" transform="rotate(-14 82 105.500)"/>
</g>
<circle cx="106.500" cy="43" r="1.600" fill="#ff4a54" filter="url(#f05)"/>
<circle cx="148" cy="45.500" r="0.900" fill="#e04a54" filter="url(#f05)"/>
<!-- engine glows -->
<ellipse cx="53" cy="75.500" rx="4.500" ry="7" fill="#f01c34" filter="url(#f1)" transform="rotate(-14 53 75.500)"/>
<ellipse cx="45" cy="77" rx="6" ry="3.600" fill="#fff0d8" filter="url(#f05)" transform="rotate(-15 45 77)"/>
<ellipse cx="77.500" cy="106.500" rx="4" ry="5.500" fill="#f01c34" filter="url(#f1)" transform="rotate(-14 77.500 106.500)"/>
<ellipse cx="70.500" cy="108" rx="5" ry="2.800" fill="#fff0d8" filter="url(#f05)" transform="rotate(-15 70.500 108)"/>
<!-- frame darkening -->
<rect x="0" y="0" width="206" height="140.500" fill="none" stroke="#1a1426" stroke-width="1" opacity=".6"/>
</g>
</svg>

<div class="t" style="left:1250px;top:239.10px;font-size:10.65px;color:#aaa;letter-spacing:0.267px;">Description</div>
<div class="t" style="left:1250px;top:260.10px;font-size:10.65px;color:#2b2b2b;letter-spacing:0.149px;">No description yet</div>
<div class="t" style="left:1037.8px;top:411.60px;font-size:10.65px;color:#3aa98a;letter-spacing:0.133px;">Properties</div>
<div class="t" style="left:1110.4px;top:411.60px;font-size:10.65px;color:#4a4a4a;letter-spacing:0.283px;">Info</div>
<div class="t" style="left:1152.2px;top:411.60px;font-size:10.65px;color:#4a4a4a;letter-spacing:0.078px;">Comments</div>
<div class="t" style="left:1227.4px;top:411.60px;font-size:10.65px;color:#4a4a4a;letter-spacing:0.052px;">Feedback</div>
<div class="t" style="left:1297.7px;top:411.60px;font-size:10.65px;color:#4a4a4a;letter-spacing:0.100px;">Localization</div>
<div class="a" style="left:1026px;top:431px;width:437px;height:1px;background:#dfe1e0;"></div>
<div class="a" style="left:1026.2px;top:430.4px;width:72.6px;height:1.6px;background:#5aa892;"></div>
<div class="t" style="left:1031.5px;top:458.10px;font-size:10.65px;color:#aaa;letter-spacing:0.372px;">Tags</div>
<svg class="a" style="left:1197.4px;top:457.8px;" width="12" height="12" viewBox="0 0 12 12"><rect x="2.900" y="2.500" width="8" height="8" rx="1.200" fill="none" stroke="#333" stroke-width="1"/><path d="M1.100 6 V1.300 C1.100 0.800 1.400 0.500 1.900 0.500 H6.600" fill="none" stroke="#333" stroke-width="1"/></svg>
<svg class="a" style="left:1221.9px;top:457.8px;" width="11" height="12" viewBox="0 0 11 12"><path d="M8 5 V3.600 L5 0.500 H1.500 C0.900 0.500 0.500 0.900 0.500 1.500 V9.500 C0.500 10.100 0.900 10.500 1.500 10.500 H3.800 M5 0.500 V3.600 H8" fill="none" stroke="#333" stroke-width="1" stroke-linejoin="round"/><path d="M9.800 10.500 V8.800 C9.800 7.900 9.300 7.400 8.400 7.400 H5.600 M7 6 L5.600 7.400 L7 8.800" fill="none" stroke="#333" stroke-width="1" stroke-linecap="round" stroke-linejoin="round"/></svg>
<div class="t" style="left:1250px;top:458.10px;font-size:10.65px;color:#aaa;letter-spacing:0.125px;">Permissions</div>
<div class="t" style="left:1031.5px;top:479.10px;font-size:10.65px;color:#222;font-weight:700;letter-spacing:-0.169px;">Local:</div>
<div class="a tag" style="left:1032px;top:500.30px;padding-left:3.2px;width:53.7px;">showspace</div>
<div class="t" style="left:1031.5px;top:530.60px;font-size:10.65px;color:#222;font-weight:700;letter-spacing:-0.054px;">Shared:</div>
<svg class="a" style="left:1250px;top:481.3px;" width="13" height="12" viewBox="0 0 13 12"><path d="M2.200 6.200 L5.200 8.600 L10.300 2.300" fill="none" stroke="#222" stroke-width="1.500" stroke-linecap="round" stroke-linejoin="round"/></svg>
<div class="t" style="left:1273.5px;top:482.10px;font-size:10.65px;color:#2b2b2b;letter-spacing:0.006px;">Show in Kiosk mode</div>
<svg class="a" style="left:1250px;top:498.5px;" width="13" height="12" viewBox="0 0 13 12"><path d="M2.200 6.200 L5.200 8.600 L10.300 2.300" fill="none" stroke="#222" stroke-width="1.500" stroke-linecap="round" stroke-linejoin="round"/></svg>
<div class="t" style="left:1273.5px;top:499.30px;font-size:10.65px;color:#2b2b2b;letter-spacing:-0.009px;">Can be shared</div>
<svg class="a" style="left:1250px;top:515.3px;" width="13" height="12" viewBox="0 0 13 12"><path d="M2.200 6.200 L5.200 8.600 L10.300 2.300" fill="none" stroke="#222" stroke-width="1.500" stroke-linecap="round" stroke-linejoin="round"/></svg>
<div class="t" style="left:1273.5px;top:516.10px;font-size:10.65px;color:#2b2b2b;letter-spacing:0.055px;">Can be downloaded internally</div>
<svg class="a" style="left:1251.5px;top:534.3px;" width="10" height="10" viewBox="0 0 10 10"><path d="M1.300 1.600 L8.300 8.200 M8.300 1.600 L1.300 8.200" stroke="#222" stroke-width="1.500" stroke-linecap="round"/></svg>
<div class="t" style="left:1273.5px;top:534.10px;font-size:10.65px;color:#2b2b2b;letter-spacing:0.042px;">Can be downloaded externally</div>
<div class="a" style="left:1483px;top:56.3px;width:1px;height:490px;background:#ffffff;"></div>
</div>
</body>
</html>
